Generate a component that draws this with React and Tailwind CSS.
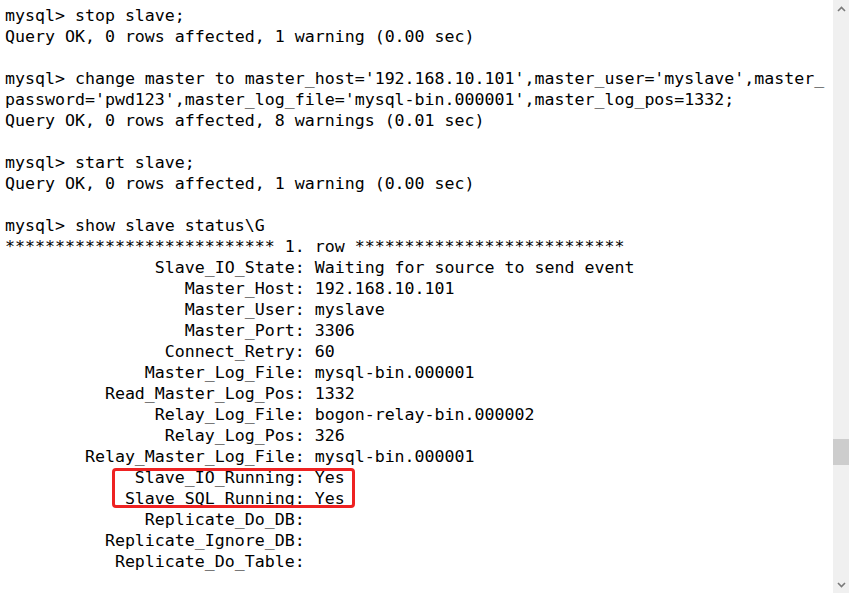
import React from 'react';

const pad = (label, value) => `${label.padStart(29)}: ${value}`.trimEnd();

const lines = [
  'mysql> stop slave;',
  'Query OK, 0 rows affected, 1 warning (0.00 sec)',
  '',
  "mysql> change master to master_host='192.168.10.101',master_user='myslave',master_",
  "password='pwd123',master_log_file='mysql-bin.000001',master_log_pos=1332;",
  'Query OK, 0 rows affected, 8 warnings (0.01 sec)',
  '',
  'mysql> start slave;',
  'Query OK, 0 rows affected, 1 warning (0.00 sec)',
  '',
  'mysql> show slave status\\G',
  '*************************** 1. row ***************************',
  pad('Slave_IO_State', 'Waiting for source to send event'),
  pad('Master_Host', '192.168.10.101'),
  pad('Master_User', 'myslave'),
  pad('Master_Port', '3306'),
  pad('Connect_Retry', '60'),
  pad('Master_Log_File', 'mysql-bin.000001'),
  pad('Read_Master_Log_Pos', '1332'),
  pad('Relay_Log_File', 'bogon-relay-bin.000002'),
  pad('Relay_Log_Pos', '326'),
  pad('Relay_Master_Log_File', 'mysql-bin.000001'),
  pad('Slave_IO_Running', 'Yes'),
  pad('Slave_SQL_Running', 'Yes'),
  pad('Replicate_Do_DB', ''),
  pad('Replicate_Ignore_DB', ''),
  pad('Replicate_Do_Table', ''),
];

const Chevron = ({ down }) => (
  <svg width="9" height="6" viewBox="0 0 9 6" className={down ? 'rotate-180' : ''}>
    <path d="M1 5 L4.5 1.5 L8 5" fill="none" stroke="#7a7a7a" strokeWidth="1.6" />
  </svg>
);

export default function App() {
  return (
    <div className="flex w-[849px] h-[593px] bg-white overflow-hidden">
      <div className="relative flex-1 pt-[5px] pl-[5px] text-black text-[16.6px] leading-[21px] font-['DejaVu_Sans_Mono',monospace]">
        {lines.map((l, i) => (
          <div key={i} className="whitespace-pre h-[21px]">{l}</div>
        ))}
        {/* highlight round the two Running rows */}
        <div className="absolute left-[112px] top-[468px] w-[243px] h-[40px] border-[3px] border-[#ee2222] rounded-[4px]" />
      </div>
      <div className="w-[16px] h-full bg-[#f0f0f0] flex flex-col items-center">
        <div className="h-[17px] flex items-center justify-center"><Chevron /></div>
        <div className="mt-[422px] w-full h-[26px] bg-[#cdcdcd]" />
        <div className="flex-1" />
        <div className="h-[17px] flex items-center justify-center"><Chevron down /></div>
      </div>
    </div>
  );
}
